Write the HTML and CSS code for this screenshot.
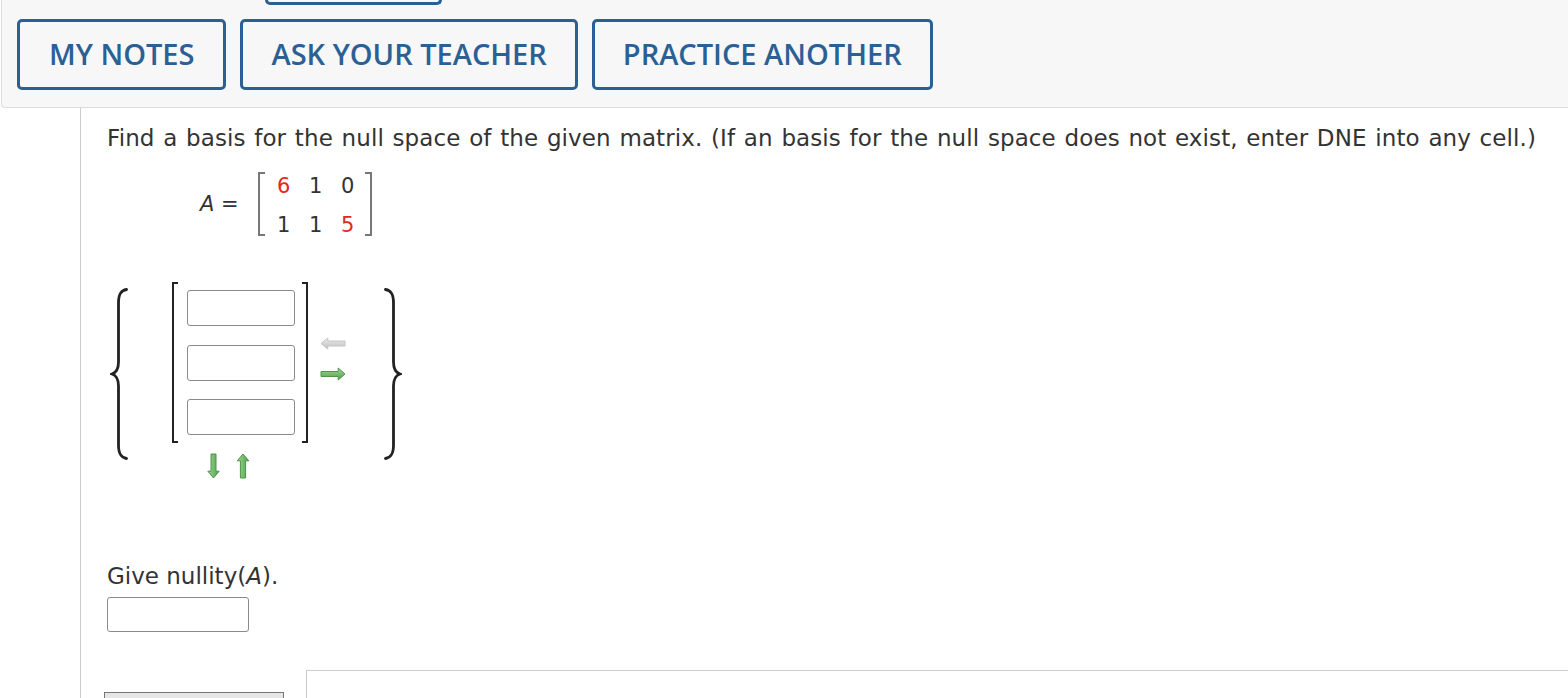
FILE: index.html
```html
<!DOCTYPE html>
<html>
<head>
<meta charset="utf-8">
<link rel="stylesheet" href="styles.css">
</head>
<body>
<div class="header">
  <div class="topbtn"></div>
  <div class="btnrow">
    <div class="btn btn-notes">MY NOTES</div>
    <div class="btn">ASK YOUR TEACHER</div>
    <div class="btn">PRACTICE ANOTHER</div>
  </div>
</div>
<div class="main">
  <p class="question">Find a basis for the null space of the given matrix. (If an basis for the null space does not exist, enter DNE into any cell.)</p>
  <div class="matrixline">
    <span class="alabel"><i>A</i> =</span>
    <div class="mbox">
      <div class="mbr mbr-l"></div>
      <div class="mrows">
        <div class="mrow"><span class="cell red">6</span><span class="cell">1</span><span class="cell">0</span></div>
        <div class="mrow"><span class="cell">1</span><span class="cell">1</span><span class="cell red">5</span></div>
      </div>
      <div class="mbr mbr-r"></div>
    </div>
  </div>

  <div class="set">
    <svg class="brace brace-l" width="18" height="172" viewBox="0 0 18 172">
      <path d="M16.5,1.5 C11,2.5 8.5,6 8.5,15 L8.5,74 C8.5,81 6.5,84.5 2,86 C6.5,87.5 8.5,91 8.5,98 L8.5,157 C8.5,166 11,169.5 16.5,170.5" fill="none" stroke="#222" stroke-width="2.8" stroke-linecap="round"/>
    </svg>
    <div class="vector">
      <div class="vecbox">
        <div class="vbr vbr-l"></div>
        <div class="vinputs">
          <div class="inp"></div>
          <div class="inp"></div>
          <div class="inp"></div>
        </div>
        <div class="vbr vbr-r"></div>
      </div>
      <div class="udarrows">
        <svg width="13" height="26" viewBox="0 0 13 26">
          <defs><linearGradient id="gd" x1="0" y1="0" x2="1" y2="0"><stop offset="0" stop-color="#9fd896"/><stop offset="1" stop-color="#4f9e4a"/></linearGradient></defs>
          <path d="M6.5,25 L0.8,18.2 L4,18.2 L4,1 L9,1 L9,18.2 L12.2,18.2 Z" fill="url(#gd)" stroke="#4e9449" stroke-width="1" stroke-linejoin="round"/>
        </svg>
        <svg width="14" height="26" viewBox="0 0 14 26">
          <defs><linearGradient id="gu" x1="0" y1="0" x2="1" y2="0"><stop offset="0" stop-color="#9fd896"/><stop offset="1" stop-color="#4f9e4a"/></linearGradient></defs>
          <path d="M7,1 L12.8,7.8 L9.6,7.8 L9.6,25 L4.4,25 L4.4,7.8 L1.2,7.8 Z" fill="url(#gu)" stroke="#4e9449" stroke-width="1" stroke-linejoin="round"/>
        </svg>
      </div>
    </div>
    <div class="lrarrows">
      <svg width="26" height="13" viewBox="0 0 26 13">
        <defs><linearGradient id="gl" x1="0" y1="0" x2="0" y2="1"><stop offset="0" stop-color="#eeeeee"/><stop offset="1" stop-color="#bdbdbd"/></linearGradient></defs>
        <path d="M1,6.5 L7.8,1 L7.8,4 L25,4 L25,9 L7.8,9 L7.8,12 Z" fill="url(#gl)" stroke="#c4c4c4" stroke-width="1" stroke-linejoin="round"/>
      </svg>
      <svg width="26" height="14" viewBox="0 0 26 14">
        <defs><linearGradient id="gr" x1="0" y1="0" x2="0" y2="1"><stop offset="0" stop-color="#9fd896"/><stop offset="1" stop-color="#4f9e4a"/></linearGradient></defs>
        <path d="M25,7 L18.2,1 L18.2,4.5 L1,4.5 L1,9.5 L18.2,9.5 L18.2,13 Z" fill="url(#gr)" stroke="#4e9449" stroke-width="1" stroke-linejoin="round"/>
      </svg>
    </div>
    <svg class="brace brace-r" width="18" height="172" viewBox="0 0 18 172">
      <path d="M1.5,1.5 C7,2.5 9.5,6 9.5,15 L9.5,74 C9.5,81 11.5,84.5 16,86 C11.5,87.5 9.5,91 9.5,98 L9.5,157 C9.5,166 7,169.5 1.5,170.5" fill="none" stroke="#222" stroke-width="2.8" stroke-linecap="round"/>
    </svg>
  </div>

  <p class="nullity">Give nullity(<i>A</i>).</p>
  <div class="inp inp-null"></div>

  <div class="bottomrow">
    <div class="graybtn"></div>
    <div class="linebox"></div>
  </div>
</div>
</body>
</html>
```

FILE: styles.css
```css
html, body {
  margin: 0;
  padding: 0;
  overflow: hidden;
  background: #ffffff;
}

body {
  font-family: "DejaVu Sans", Verdana, sans-serif;
  color: #333333;
}

.header {
  margin-left: 1px;
  height: 108px;
  box-sizing: border-box;
  background: #f7f7f7;
  border-left: 1px solid #dddddd;
  border-bottom: 1px solid #dddddd;
  border-bottom-left-radius: 4px;
  padding-left: 15px;
}

.topbtn {
  margin-left: 248px;
  width: 177px;
  height: 5px;
  box-sizing: border-box;
  border: 3px solid #2b6095;
  border-top: 0;
  border-radius: 0 0 5px 5px;
}

.btnrow {
  display: flex;
  gap: 14px;
  margin-top: 14px;
}

.btn {
  height: 71px;
  box-sizing: border-box;
  border: 3px solid #2b6095;
  border-radius: 5px;
  padding: 0 28px 2px;
  display: flex;
  align-items: center;
  font-family: "Open Sans", sans-serif;
  font-weight: 600;
  font-size: 29px;
  color: #2b6095;
}

.btn-notes {
  padding-left: 29px;
  padding-right: 29px;
}

.main {
  margin-left: 80px;
  border-left: 1px solid #cccccc;
  padding: 17px 0 0 26px;
  height: 620px;
}

.question {
  margin: 0;
  font-size: 23px;
  line-height: 27px;
  white-space: nowrap;
  word-spacing: 1.25px;
  letter-spacing: 0.1px;
}

.matrixline {
  display: flex;
  align-items: center;
  margin-top: 20px;
  font-size: 21px;
}

.alabel {
  margin-left: 93px;
  margin-right: 19px;
  white-space: nowrap;
}

.mbox {
  display: flex;
  height: 64px;
}

.mbr {
  width: 5px;
  border-top: 2px solid #777;
  border-bottom: 2px solid #777;
}

.mbr-l {
  border-left: 2px solid #777;
}

.mbr-r {
  border-right: 2px solid #777;
}

.mrows {
  display: flex;
  flex-direction: column;
  gap: 19px;
  padding-top: 4px;
  padding-left: 3px;
  padding-right: 1px;
}

.mrow {
  display: flex;
  line-height: 20px;
}

.cell {
  width: 32px;
  text-align: center;
}

.red {
  color: #e2291e;
}

.set {
  display: flex;
  align-items: flex-start;
  margin-top: 46px;
}

.brace-l {
  margin-left: 3px;
  margin-top: 6px;
}

.vector {
  margin-left: 44px;
  display: flex;
  flex-direction: column;
}

.vecbox {
  display: flex;
  height: 161px;
}

.vbr {
  width: 4px;
  border-top: 2px solid #222;
  border-bottom: 2px solid #222;
}

.vbr-l {
  border-left: 2px solid #222;
}

.vbr-r {
  border-right: 2px solid #222;
}

.vinputs {
  display: flex;
  flex-direction: column;
  gap: 18.5px;
  padding-top: 8px;
  margin-left: 9px;
  margin-right: 7px;
}

.inp {
  width: 108px;
  height: 36px;
  box-sizing: border-box;
  border: 1px solid #8a8a8a;
  border-radius: 3px;
  background: #ffffff;
}

.udarrows {
  display: flex;
  gap: 16px;
  margin-left: 35px;
  margin-top: 10px;
}

.lrarrows {
  display: flex;
  flex-direction: column;
  gap: 17px;
  margin-left: 12px;
  margin-top: 55px;
}

.brace-r {
  margin-left: 38px;
  margin-top: 6px;
}

.nullity {
  margin: 84px 0 0;
  font-size: 23px;
  line-height: 27px;
}

.inp-null {
  width: 142px;
  height: 35px;
  margin-top: 7px;
}

.bottomrow {
  display: flex;
  align-items: flex-start;
  margin-top: 38px;
}

.graybtn {
  margin-left: -3px;
  margin-top: 22px;
  width: 180px;
  height: 30px;
  box-sizing: border-box;
  border: 1px solid #777777;
  background: #e6e6e6;
}

.linebox {
  flex: 1;
  margin-left: 22px;
  height: 60px;
  border-top: 1px solid #cccccc;
  border-left: 1px solid #cccccc;
}
```
